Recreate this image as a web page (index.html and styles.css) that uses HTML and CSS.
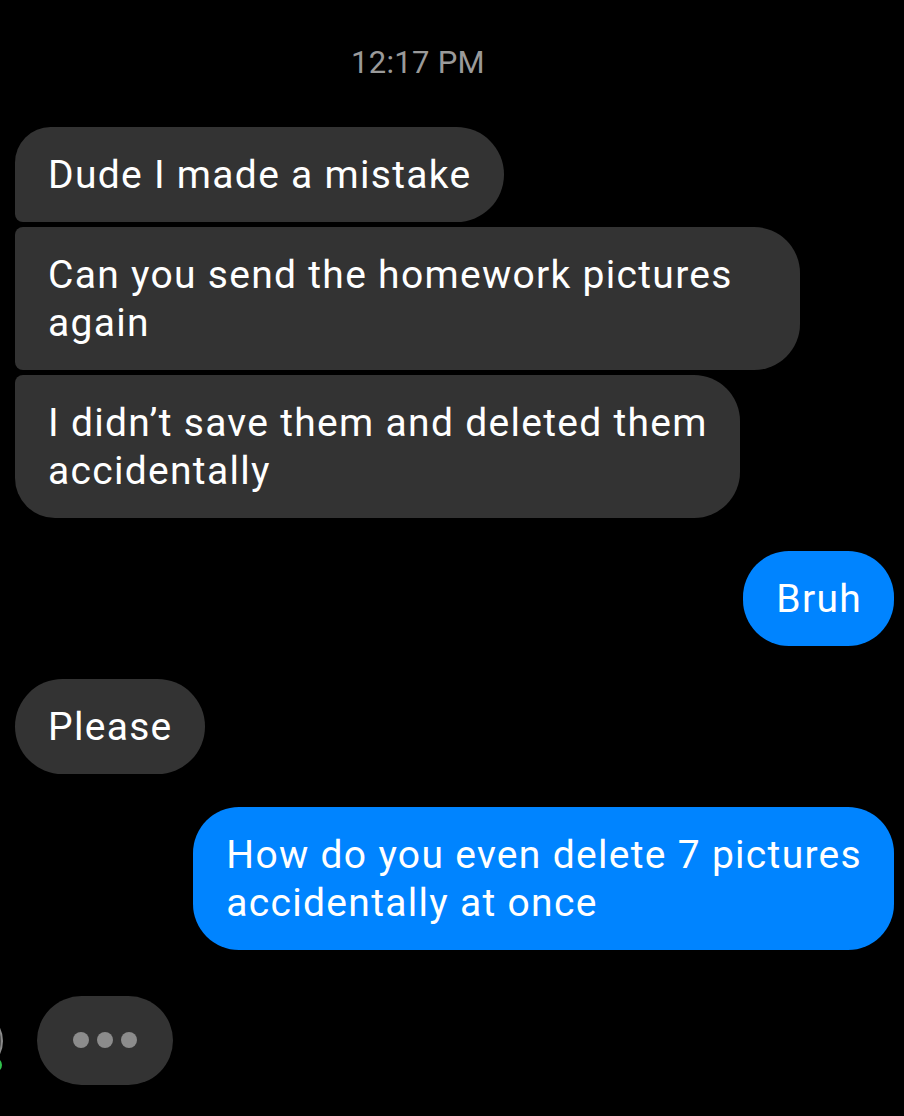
FILE: index.html
```html
<!DOCTYPE html>
<html>
<head>
    <meta charset="UTF-8">
    <meta name="viewport" content="width=device-width, initial-scale=1.0">
    <title>Chat</title>
    <link rel="stylesheet" href="styles.css">
</head>
<body>
    <div class="chat">
        <div class="time">12:17 PM</div>

        <div class="group in">
            <div class="bubble first">Dude I made a mistake</div>
            <div class="bubble mid wide">Can you send the homework pictures<br>again</div>
            <div class="bubble last">I didn’t save them and deleted them<br>accidentally</div>
        </div>

        <div class="group out">
            <div class="bubble">Bruh</div>
        </div>

        <div class="group in">
            <div class="bubble">Please</div>
        </div>

        <div class="group out">
            <div class="bubble">How do you even delete 7 pictures<br>accidentally at once</div>
        </div>

        <!-- indicador de escritura -->
        <div class="typing-row">
            <div class="avatar"><span class="online"></span></div>
            <div class="typing"><span></span><span></span><span></span></div>
        </div>
    </div>
</body>
</html>
```

FILE: styles.css
```css
body {
    margin: 0;
    padding: 0;
    background: #000;
    overflow: hidden;
    font-family: Roboto, "Noto Sans", sans-serif;
}

.chat {
    display: flex;
    flex-direction: column;
    padding: 0 10px 0 15px;
}

.time {
    margin-top: 45px;
    margin-bottom: 46px;
    padding-right: 73px;
    text-align: center;
    color: #9a9a9a;
    font-size: 31px;
    line-height: 36px;
    letter-spacing: 0.3px;
}

.group {
    display: flex;
    flex-direction: column;
    gap: 5px;
    margin-bottom: 33px;
}

.group.in {
    align-items: flex-start;
}

.group.out {
    align-items: flex-end;
}

.bubble {
    color: #fff;
    font-size: 39px;
    line-height: 48px;
    letter-spacing: 1.3px;
    padding: 24px 32px 23px 33px;
    border-radius: 48px;
}

.in .bubble {
    background: #333333;
}

.out .bubble {
    background: #0084ff;
    border-radius: 46px;
}

.in .bubble.first {
    border-radius: 36px 48px 48px 8px;
}

.in .bubble.mid {
    border-radius: 8px 46px 46px 8px;
}

.in .bubble.last {
    border-radius: 8px 46px 46px 40px;
}

.bubble.wide {
    min-width: 720px;
}

.typing-row {
    display: flex;
    align-items: center;
    gap: 34px;
    margin-top: 13px;
    margin-left: -15px;
}

.avatar {
    position: relative;
    width: 60px;
    height: 60px;
    margin-left: -57px;
    border-radius: 50%;
    background: #4a4a4a;
    border: 2px solid #8a8a8a;
    box-sizing: border-box;
}

.online {
    position: absolute;
    right: -4px;
    bottom: -6px;
    width: 14px;
    height: 14px;
    border-radius: 50%;
    background: #31c24d;
    border: 3px solid #000;
}

.typing {
    display: flex;
    align-items: center;
    gap: 8px;
    padding: 36px 36px 37px;
    background: #333333;
    border-radius: 45px;
}

.typing span {
    width: 16px;
    height: 16px;
    border-radius: 50%;
    background: #8c8c8c;
}
```
